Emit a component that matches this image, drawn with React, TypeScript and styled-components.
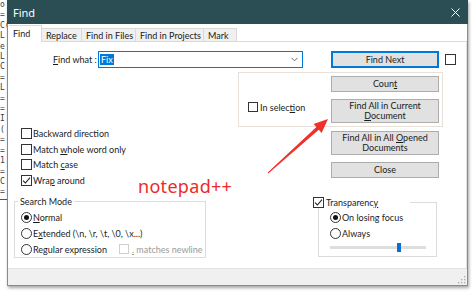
import React from "react";
import styled, { createGlobalStyle } from "styled-components";

const FONT = `"Lato", "Noto Sans", sans-serif`;

const Global = createGlobalStyle`
  html, body { margin: 0; padding: 0; background: #ffffff; }
  * { box-sizing: border-box; }
  #root {
    width: 474px; height: 292px; overflow: hidden; position: relative;
    font-family: ${FONT}; font-size: 9px; color: #1b1b1b;
  }
  u { text-underline-offset: 1px; }
`;

const Screen = styled.div`
  position: relative;
  display: flex;
  width: 474px;
  height: 292px;
`;

const EditorStrip = styled.pre`
  margin: 0;
  width: 7px;
  height: 200px;
  overflow: hidden;
  font-family: "DejaVu Sans Mono", monospace;
  font-size: 8px;
  line-height: 10.4px;
  color: #3a3a3a;
  padding-top: 0;
  border-bottom: 1px solid #555;
`;

const Dialog = styled.div`
  width: 461px;
  height: 286px;
  display: flex;
  flex-direction: column;
  box-shadow: 1px 2px 3px rgba(0, 0, 0, 0.35);
  background: #fff;
`;

const TitleBar = styled.div`
  height: 24px;
  flex: none;
  background: #2a4e54;
  display: flex;
  align-items: center;
  justify-content: space-between;
  padding: 0 8px 0 6px;
`;

const TitleText = styled.span`
  color: #ffffff;
  font-family: "Noto Sans", sans-serif;
  font-size: 11px;
`;

const Frame = styled.div`
  flex: 1;
  display: flex;
  flex-direction: column;
  border: 1px solid #858c8d;
  border-top: none;
`;

const TabStrip = styled.div`
  height: 17px;
  flex: none;
  display: flex;
  align-items: flex-end;
`;

const Tab = styled.div<{ $w: number; $active?: boolean }>`
  width: ${(p) => p.$w}px;
  height: ${(p) => (p.$active ? 17 : 13)}px;
  margin-left: ${(p) => (p.$active ? 0 : -1)}px;
  display: flex;
  align-items: center;
  padding-left: ${(p) => (p.$active ? 4 : 4)}px;
  padding-bottom: ${(p) => (p.$active ? 2 : 0)}px;
  background: ${(p) => (p.$active ? "#ffffff" : "#f0f0f0")};
  border: 1px solid #d9d9d9;
  border-bottom: none;
  border-left-color: ${(p) => (p.$active ? "transparent" : "#d9d9d9")};
  position: relative;
  z-index: ${(p) => (p.$active ? 2 : 1)};
  margin-bottom: ${(p) => (p.$active ? -1 : 0)}px;
  white-space: nowrap;
`;

const TabPage = styled.div`
  flex: 1;
  display: flex;
  flex-direction: column;
  border-top: 1px solid #d9d9d9;
  border-right: 1px solid #e2e2e2;
  padding-top: 9px;
`;

const FindRow = styled.div`
  height: 17px;
  display: flex;
  align-items: center;
  padding-left: 45px;
`;

const FieldLabel = styled.span`
  width: 42px;
  margin-right: 3px;
  white-space: nowrap;
`;

const Combo = styled.div`
  width: 205px;
  height: 17px;
  border: 1px solid #0078d7;
  background: #fff;
  display: flex;
  align-items: center;
  justify-content: space-between;
  padding: 0 4px 0 1px;
`;

const Selected = styled.span`
  background: #0078d7;
  color: #fff;
  padding: 0 1px;
  line-height: 11px;
`;

const Button = styled.div<{ $tall?: boolean; $focus?: boolean; $w?: number }>`
  width: ${(p) => p.$w ?? 108}px;
  height: ${(p) => (p.$tall ? 24 : 16)}px;
  flex: none;
  background: #e1e1e1;
  border: 1px solid ${(p) => (p.$focus ? "#0078d7" : "#adadad")};
  box-shadow: ${(p) => (p.$focus ? "inset 0 0 0 1px #0078d7" : "none")};
  display: flex;
  align-items: center;
  justify-content: center;
  text-align: center;
  line-height: 10px;
  white-space: pre-line;
`;

const Box = styled.span<{ $checked?: boolean; $disabled?: boolean; $size?: number }>`
  width: ${(p) => p.$size ?? 11}px;
  height: ${(p) => p.$size ?? 11}px;
  flex: none;
  border: 1px solid ${(p) => (p.$disabled ? "#cfcfcf" : "#333333")};
  background: #fff;
  display: flex;
  align-items: center;
  justify-content: center;
`;

const Radio = styled.span<{ $on?: boolean }>`
  width: 11px;
  height: 11px;
  flex: none;
  border-radius: 50%;
  border: 1px solid #333;
  background: #fff;
  display: flex;
  align-items: center;
  justify-content: center;
  &::after {
    content: "";
    width: 5px;
    height: 5px;
    border-radius: 50%;
    background: ${(p) => (p.$on ? "#111" : "transparent")};
  }
`;

const Lower = styled.div`
  display: flex;
  margin-top: 4px;
`;

const LeftCol = styled.div`
  width: 230px;
  display: flex;
  flex-direction: column;
  padding-left: 6px;
  padding-top: 54px;
`;

const CheckList = styled.div`
  display: flex;
  flex-direction: column;
  padding-left: 7px;
`;

const OptionRow = styled.label<{ $h?: number; $muted?: boolean }>`
  height: ${(p) => p.$h ?? 16}px;
  display: flex;
  align-items: center;
  gap: 1px;
  white-space: nowrap;
  color: ${(p) => (p.$muted ? "#9a9a9a" : "inherit")};
`;

const Group = styled.fieldset<{ $w: number }>`
  width: ${(p) => p.$w}px;
  margin: 0;
  min-width: 0;
  border: 1px solid #dcdcdc;
`;

const SearchGroup = styled(Group)`
  margin-top: 8px;
  padding: 2px 0 0 6px;
`;

const GroupLegend = styled.legend`
  padding: 0 2px;
  margin-left: -3px;
  line-height: 11px;
  height: 11px;
`;

const RegexRow = styled.div`
  height: 16px;
  display: flex;
  align-items: center;
`;

const NewlineOption = styled(OptionRow)`
  margin-left: 12px;
  gap: 3px;
`;

const RightCol = styled.div`
  width: 205px;
  display: flex;
  flex-direction: column;
`;

const SelBox = styled.div`
  height: 55px;
  border: 1px solid #e8e1da;
  display: flex;
  align-items: center;
  padding: 3px 3px 3px 9px;
`;

const InSelection = styled(OptionRow)`
  margin-top: 15px;
  gap: 2px;
`;

const ButtonStack = styled.div`
  margin-left: auto;
  display: flex;
  flex-direction: column;
  gap: 7px;
`;

const OuterStack = styled(ButtonStack)`
  align-self: flex-end;
  margin-right: 4px;
  margin-top: 4px;
`;

const TransGroup = styled(Group)`
  margin-top: 19px;
  margin-left: 80px;
  padding: 1px 0 3px 11px;
`;

const TransLegend = styled.legend`
  width: 97px;
  margin-left: -17px;
  padding: 0;
  height: 11px;
  line-height: 11px;
  display: flex;
  align-items: center;
  gap: 2px;
  background: #fff;
`;

const SliderRow = styled.div`
  height: 12px;
  display: flex;
  align-items: center;
`;

const Track = styled.div`
  position: relative;
  width: 96px;
  height: 3px;
  background: #dedede;
`;

const Thumb = styled.div`
  position: absolute;
  top: -3px;
  width: 4px;
  height: 9px;
  background: #0a6fd0;
`;

const StatusBar = styled.div`
  height: 17px;
  flex: none;
  background: #f0f0f0;
  border-top: 1px solid #e2e2e2;
  display: flex;
  justify-content: flex-end;
  align-items: flex-end;
  padding: 0 1px 1px 0;
`;

const Annotation = styled.span`
  position: absolute;
  left: 138px;
  top: 174px;
  color: #ec2a2a;
  font-family: "Noto Sans", sans-serif;
  font-size: 18px;
  letter-spacing: 0.3px;
  white-space: nowrap;
`;

const ArrowLayer = styled.svg`
  position: absolute;
  left: 0;
  top: 0;
  pointer-events: none;
`;

const Check = () => (
  <svg width="9" height="9" viewBox="0 0 9 9">
    <path d="M1 4.6 L3.4 7 L8 1.6" fill="none" stroke="#222" strokeWidth="1.1" />
  </svg>
);

const CheckOption = ({ children, checked }: { children: React.ReactNode; checked?: boolean }) => (
  <OptionRow $h={15.5}>
    <Box $checked={checked}>{checked && <Check />}</Box>
    <span>{children}</span>
  </OptionRow>
);

const RadioOption = ({ children, on }: { children: React.ReactNode; on?: boolean }) => (
  <OptionRow>
    <Radio $on={on} />
    <span>{children}</span>
  </OptionRow>
);

const editorLines = ["o", "=", "C(", "L", "e", "L", "C", "=", "L", "=", "=", "I", "(", "=", "=", "1", "=", "C", "="].join("\n");

export default function App() {
  return (
    <>
      <Global />
      <Screen>
        <EditorStrip>{editorLines}</EditorStrip>
        <Dialog>
          <TitleBar>
            <TitleText>Find</TitleText>
            <svg width="9" height="9" viewBox="0 0 9 9">
              <path d="M0.5 0.5 L8.5 8.5 M8.5 0.5 L0.5 8.5" stroke="#ffffff" strokeWidth="1" />
            </svg>
          </TitleBar>
          <Frame>
            <TabStrip>
              <Tab $w={34} $active>Find</Tab>
              <Tab $w={41}>Replace</Tab>
              <Tab $w={55}>Find in Files</Tab>
              <Tab $w={69}>Find in Projects</Tab>
              <Tab $w={34}>Mark</Tab>
            </TabStrip>
            <TabPage>
              <FindRow>
                <FieldLabel>
                  <u>F</u>ind what :
                </FieldLabel>
                <Combo>
                  <Selected>Fix</Selected>
                  <svg width="7" height="5" viewBox="0 0 7 5">
                    <path d="M0.5 0.8 L3.5 3.8 L6.5 0.8" fill="none" stroke="#555" strokeWidth="0.9" />
                  </svg>
                </Combo>
                <Button $focus style={{ marginLeft: 28, height: 17 }}>Find Next</Button>
                <Box style={{ marginLeft: 6 }} />
              </FindRow>
              <Lower>
                <LeftCol>
                  <CheckList>
                    <CheckOption>Backward direction</CheckOption>
                    <CheckOption>
                      Match <u>w</u>hole word only
                    </CheckOption>
                    <CheckOption>
                      Match <u>c</u>ase
                    </CheckOption>
                    <CheckOption checked>
                      Wra<u>p</u> around
                    </CheckOption>
                  </CheckList>
                  <SearchGroup $w={192}>
                    <GroupLegend>Search Mode</GroupLegend>
                    <RadioOption on>
                      <u>N</u>ormal
                    </RadioOption>
                    <RadioOption>
                      E<u>x</u>tended (\n, \r, \t, \0, \x...)
                    </RadioOption>
                    <RegexRow>
                      <RadioOption>Regular expression</RadioOption>
                      <NewlineOption $muted>
                        <Box $disabled $size={10} />
                        <span>
                          <u>.</u> matches newline
                        </span>
                      </NewlineOption>
                    </RegexRow>
                  </SearchGroup>
                </LeftCol>
                <RightCol>
                  <SelBox>
                    <InSelection>
                      <Box $size={10} />
                      <span>
                        In selec<u>t</u>ion
                      </span>
                    </InSelection>
                    <ButtonStack>
                      <Button>
                        <span>
                          Coun<u>t</u>
                        </span>
                      </Button>
                      <Button $tall>
                        <span>
                          Find All in Current
                          <br />
                          <u>D</u>ocument
                        </span>
                      </Button>
                    </ButtonStack>
                  </SelBox>
                  <OuterStack>
                    <Button $tall>
                      <span>
                        Find All in All <u>O</u>pened
                        <br />
                        Documents
                      </span>
                    </Button>
                    <Button>Close</Button>
                  </OuterStack>
                  <TransGroup $w={119}>
                    <TransLegend>
                      <Box $checked>
                        <Check />
                      </Box>
                      <span>
                        Transparenc<u>y</u>
                      </span>
                    </TransLegend>
                    <RadioOption on>On losing focus</RadioOption>
                    <RadioOption>Always</RadioOption>
                    <SliderRow>
                      <Track>
                        <Thumb style={{ left: 67 }} />
                      </Track>
                    </SliderRow>
                  </TransGroup>
                </RightCol>
              </Lower>
            </TabPage>
            <StatusBar>
              <svg width="8" height="8" viewBox="0 0 8 8">
                <g fill="#a8a8a8">
                  <rect x="6" y="0" width="1.3" height="1.3" />
                  <rect x="3" y="3" width="1.3" height="1.3" />
                  <rect x="6" y="3" width="1.3" height="1.3" />
                  <rect x="0" y="6" width="1.3" height="1.3" />
                  <rect x="3" y="6" width="1.3" height="1.3" />
                  <rect x="6" y="6" width="1.3" height="1.3" />
                </g>
              </svg>
            </StatusBar>
          </Frame>
        </Dialog>
        <Annotation>notepad++</Annotation>
        <ArrowLayer width="474" height="292" viewBox="0 0 474 292">
          <polygon
            fill="#f0302a"
            points="268.3,173.4 318.8,129.7 321.6,132.9 328,119 313.6,123.9 316.4,127.1 267.7,172.6"
          />
        </ArrowLayer>
      </Screen>
    </>
  );
}
